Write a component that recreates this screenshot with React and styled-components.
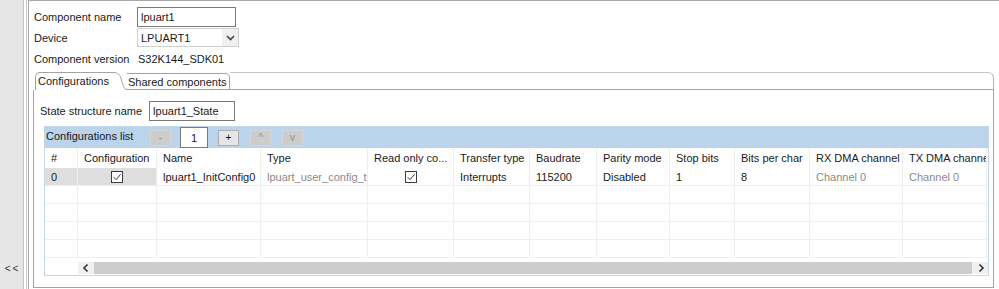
import React from 'react'
import styled, { createGlobalStyle } from 'styled-components'

const GlobalStyle = createGlobalStyle`
  html, body {
    margin: 0;
    padding: 0;
    background: #ffffff;
  }
  body {
    font-family: "Liberation Sans", Arial, sans-serif;
    font-size: 11px;
    color: #1a1a1a;
  }
`

const columns = [
  { key: 'idx', title: '#', width: 33 },
  { key: 'cfg', title: 'Configuration', width: 79, center: true },
  { key: 'name', title: 'Name', width: 104 },
  { key: 'type', title: 'Type', width: 107, muted: true },
  { key: 'ro', title: 'Read only co...', width: 86, center: true },
  { key: 'transfer', title: 'Transfer type', width: 76 },
  { key: 'baud', title: 'Baudrate', width: 67 },
  { key: 'parity', title: 'Parity mode', width: 73 },
  { key: 'stop', title: 'Stop bits', width: 65 },
  { key: 'bits', title: 'Bits per char', width: 75 },
  { key: 'rx', title: 'RX DMA channel', width: 93, muted: true },
  { key: 'tx', title: 'TX DMA channe', width: 84, muted: true },
]

const rows = [
  {
    idx: '0',
    cfg: true,
    name: 'lpuart1_InitConfig0',
    type: 'lpuart_user_config_t',
    ro: true,
    transfer: 'Interrupts',
    baud: '115200',
    parity: 'Disabled',
    stop: '1',
    bits: '8',
    rx: 'Channel 0',
    tx: 'Channel 0',
  },
]

const emptyRows = 4

function CheckMark() {
  return (
    <svg width="12" height="12" viewBox="0 0 12 12">
      <rect x="0.5" y="0.5" width="11" height="11" fill="#ffffff" stroke="#3c3c3c" />
      <path d="M2.6 6.2 L5 8.6 L9.6 3.4" fill="none" stroke="#333333" strokeWidth="1" />
    </svg>
  )
}

function Chevron({ dir }) {
  const d = dir === 'left' ? 'M5.5 1.5 L2 5 L5.5 8.5' : 'M2.5 1.5 L6 5 L2.5 8.5'
  return (
    <svg width="8" height="10" viewBox="0 0 8 10">
      <path d={d} fill="none" stroke="#333333" strokeWidth="1.6" />
    </svg>
  )
}

function App() {
  return (
    <>
      <GlobalStyle />
      <Window>
        <Sidebar>
          <Collapse>&lt;&lt;</Collapse>
        </Sidebar>
        <Sash />
        <Panel>
          <Form>
            <Label>Component name</Label>
            <TextField width={99}>lpuart1</TextField>
            <Label>Device</Label>
            <Select>
              <span>LPUART1</span>
              <SelectArrow>
                <svg width="9" height="6" viewBox="0 0 9 6">
                  <path d="M1 1 L4.5 4.5 L8 1" fill="none" stroke="#444444" strokeWidth="1.6" />
                </svg>
              </SelectArrow>
            </Select>
            <Label>Component version</Label>
            <Value>S32K144_SDK01</Value>
          </Form>

          <TabFolder>
            <TabStrip>
              <ActiveTab>
                <ActiveTabBody>Configurations</ActiveTabBody>
                <svg width="13" height="18" viewBox="0 0 13 18">
                  <path d="M0 1 L0 18 L13 18 C10 18 9 13 7.5 8 C6 3 4 1 0 1 Z" fill="#ffffff" />
                  <path d="M0 0.5 C4 0.5 6 2.5 7.5 8 C9 13 10 17.5 13 17.5" fill="none" stroke="#a3a3a3" />
                </svg>
              </ActiveTab>
              <Tab>Shared components</Tab>
              <StripFill />
            </TabStrip>

            <TabBody>
              <StateRow>
                <span>State structure name</span>
                <TextField width={86}>lpuart1_State</TextField>
              </StateRow>

              <Group>
                <GroupBar>
                  <GroupTitle>Configurations list</GroupTitle>
                  <ToolButton disabled>-</ToolButton>
                  <Counter>1</Counter>
                  <ToolButton>+</ToolButton>
                  <ToolButton disabled>^</ToolButton>
                  <ToolButton disabled>v</ToolButton>
                </GroupBar>

                <Table>
                  <HeadRow>
                    {columns.map(col => (
                      <HeadCell key={col.key} width={col.width}>
                        {col.title}
                      </HeadCell>
                    ))}
                  </HeadRow>
                  {rows.map(row => (
                    <Row key={row.idx}>
                      {columns.map((col, i) => (
                        <Cell
                          key={col.key}
                          width={col.width}
                          center={col.center}
                          muted={col.muted}
                          shaded={i < 2}
                        >
                          {typeof row[col.key] === 'boolean' ? <CheckMark /> : row[col.key]}
                        </Cell>
                      ))}
                    </Row>
                  ))}
                  {Array.from({ length: emptyRows }).map((_, r) => (
                    <Row key={'e' + r}>
                      {columns.map(col => (
                        <Cell key={col.key} width={col.width} />
                      ))}
                    </Row>
                  ))}
                  <ScrollRow>
                    <ScrollGutter />
                    <Scrollbar>
                      <ScrollButton>
                        <Chevron dir="left" />
                      </ScrollButton>
                      <Thumb />
                      <ScrollButton>
                        <Chevron dir="right" />
                      </ScrollButton>
                    </Scrollbar>
                  </ScrollRow>
                </Table>
              </Group>
            </TabBody>
          </TabFolder>
        </Panel>
      </Window>
    </>
  )
}

const Window = styled.div`
  display: flex;
  height: 289px;
  width: 999px;
  overflow: hidden;
`

const Sidebar = styled.div`
  width: 23px;
  flex: none;
  background: #e6e6e6;
  border-right: 1px solid #c4c4c4;
  display: flex;
  flex-direction: column;
  justify-content: flex-end;
  align-items: center;
`

const Collapse = styled.div`
  font-size: 10px;
  letter-spacing: 2px;
  padding-left: 2px;
  color: #333333;
  padding-bottom: 15px;
`

const Sash = styled.div`
  width: 2px;
  flex: none;
  border-right: 1px solid #c8c8c8;
  margin-right: 1px;
`

const Panel = styled.div`
  flex: 1;
  min-width: 0;
  border-left: 1px solid #a8a8a8;
  border-top: 1px solid #a8a8a8;
  padding: 6px 0 1px 4px;
  display: flex;
  flex-direction: column;
`

const Form = styled.div`
  display: grid;
  grid-template-columns: 103px auto;
  grid-auto-rows: 19px;
  row-gap: 2px;
  align-items: center;
  justify-items: start;
  padding-left: 1px;
`

const Label = styled.span`
  white-space: nowrap;
`

const Value = styled.span`
  padding-left: 1px;
`

const TextField = styled.div`
  box-sizing: border-box;
  width: ${p => p.width}px;
  height: 20px;
  border: 1px solid #7a7a7a;
  background: #ffffff;
  padding: 0 3px;
  display: flex;
  align-items: center;
`

const Select = styled.div`
  box-sizing: border-box;
  width: 102px;
  height: 19px;
  border: 1px solid #cfcfcf;
  background: #ffffff;
  padding: 0 0 0 3px;
  display: flex;
  align-items: center;
  justify-content: space-between;
`

const SelectArrow = styled.div`
  width: 16px;
  height: 17px;
  background: #f0f0f0;
  display: flex;
  align-items: center;
  justify-content: center;
`

const TabFolder = styled.div`
  flex: 1;
  margin-top: 4px;
  display: flex;
  flex-direction: column;
`

const TabStrip = styled.div`
  display: flex;
  align-items: flex-end;
  height: 18px;
  padding-left: 2px;
`

const ActiveTab = styled.div`
  display: flex;
  align-items: flex-end;
  height: 18px;
`

const ActiveTabBody = styled.div`
  box-sizing: border-box;
  height: 18px;
  width: 79px;
  padding: 0 0 1px 2px;
  border-left: 1px solid #a3a3a3;
  border-top: 1px solid #a3a3a3;
  border-top-left-radius: 5px;
  display: flex;
  align-items: center;
`

const Tab = styled.div`
  box-sizing: border-box;
  height: 17px;
  padding: 0 3px 0 1px;
  border-top: 1px solid #a3a3a3;
  border-right: 1px solid #a3a3a3;
  border-bottom: 1px solid #a3a3a3;
  border-top-right-radius: 5px;
  display: flex;
  align-items: center;
`

const StripFill = styled.div`
  flex: 1;
  align-self: stretch;
  border-top: 1px solid #c4c4c4;
  border-bottom: 1px solid #a3a3a3;
  border-right: 1px solid #b5b5b5;
  border-top-right-radius: 6px;
  box-sizing: border-box;
  margin-right: 5px;
`

const TabBody = styled.div`
  flex: 1;
  border-left: 1px solid #a3a3a3;
  border-right: 1px solid #a3a3a3;
  border-bottom: 1px solid #a3a3a3;
  margin-right: 5px;
  padding: 11px 4px 0 6px;
  display: flex;
  flex-direction: column;
`

const StateRow = styled.div`
  display: flex;
  align-items: center;
  gap: 7px;
  height: 20px;
`

const Group = styled.div`
  margin: 5px 0 0 4px;
  border: 1px solid #c2d6ec;
  display: flex;
  flex-direction: column;
  overflow: hidden;
`

const GroupBar = styled.div`
  height: 21px;
  background: #bcd3ec;
  display: flex;
  align-items: center;
  padding-left: 1px;
`

const GroupTitle = styled.span`
  width: 104px;
  padding-bottom: 3px;
`

const ToolButton = styled.div`
  box-sizing: border-box;
  width: 21px;
  height: 16px;
  margin-right: 11px;
  display: flex;
  align-items: center;
  justify-content: center;
  font-size: 10px;
  color: ${p => (p.disabled ? '#8f8f8f' : '#111111')};
  background: ${p => (p.disabled ? '#cccccc' : '#e6e6e6')};
  border: 1px solid ${p => (p.disabled ? '#d6d6d6' : '#adadad')};
`

const Counter = styled.div`
  box-sizing: border-box;
  width: 28px;
  height: 21px;
  margin-right: 10px;
  margin-left: -2px;
  background: #ffffff;
  border: 1px solid #7a7a7a;
  display: flex;
  align-items: center;
  justify-content: center;
`

const Table = styled.div`
  display: flex;
  flex-direction: column;
  white-space: nowrap;
`

const Row = styled.div`
  display: flex;
  height: 17px;
  border-bottom: 1px solid #f0f0f0;
`

const HeadRow = styled(Row)`
  height: 20px;
  border-bottom: none;
`

const HeadCell = styled.div`
  flex: none;
  box-sizing: border-box;
  width: ${p => p.width}px;
  padding-left: 6px;
  display: flex;
  align-items: center;
  border-right: 1px solid #eeeeee;
  overflow: hidden;
`

const Cell = styled.div`
  flex: none;
  box-sizing: border-box;
  width: ${p => p.width}px;
  padding-left: ${p => (p.center ? 0 : 6)}px;
  display: flex;
  align-items: center;
  justify-content: ${p => (p.center ? 'center' : 'flex-start')};
  border-right: 1px solid #eeeeee;
  overflow: hidden;
  background: ${p => (p.shaded ? '#dedede' : '#ffffff')};
  color: ${p => (p.muted ? '#8a8a8a' : '#1a1a1a')};
`

const ScrollRow = styled.div`
  display: flex;
  height: 12px;
  margin-top: 4px;
  margin-bottom: 1px;
`

const ScrollGutter = styled.div`
  width: 33px;
  flex: none;
`

const Scrollbar = styled.div`
  flex: 1;
  display: flex;
  background: #f0f0f0;
`

const ScrollButton = styled.div`
  width: 15px;
  flex: none;
  display: flex;
  align-items: center;
  justify-content: center;
`

const Thumb = styled.div`
  flex: 1;
  background: #cdcdcd;
  margin: 0 1px;
`

export default App
